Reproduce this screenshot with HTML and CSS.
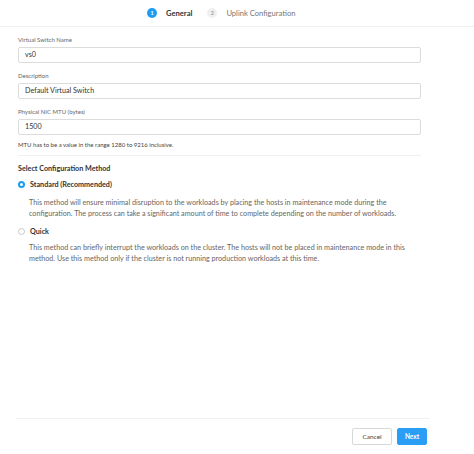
FILE: index.html
```html
<!DOCTYPE html>
<html>
<head>
<meta charset="utf-8">
<link rel="stylesheet" href="styles.css">
</head>
<body>
<div class="page">
  <header class="steps">
    <div class="step active"><span class="num">1</span><span class="step-label">General</span></div>
    <div class="step"><span class="num">2</span><span class="step-label">Uplink Configuration</span></div>
  </header>
  <main class="form">
    <label class="label">Virtual Switch Name</label>
    <div class="input">vs0</div>
    <label class="label">Description</label>
    <div class="input">Default Virtual Switch</div>
    <label class="label">Physical NIC MTU (bytes)</label>
    <div class="input">1500</div>
    <div class="help">MTU has to be a value in the range 1280 to 9216 inclusive.</div>
    <div class="sep"></div>
    <div class="section-title">Select Configuration Method</div>
    <div class="radio-row"><span class="radio checked"></span><span class="radio-label">Standard (Recommended)</span></div>
    <p class="desc first">This method will ensure minimal disruption to the workloads by placing the hosts in maintenance mode during the<br>configuration. The process can take a significant amount of time to complete depending on the number of workloads.</p>
    <div class="radio-row quick"><span class="radio"></span><span class="radio-label">Quick</span></div>
    <p class="desc second">This method can briefly interrupt the workloads on the cluster. The hosts will not be placed in maintenance mode in this<br>method. Use this method only if the cluster is not running production workloads at this time.</p>
  </main>
  <footer class="footer">
    <button class="btn cancel">Cancel</button>
    <button class="btn next">Next</button>
  </footer>
</div>
</body>
</html>
```
FILE: styles.css
```css
* { box-sizing: border-box; }
html, body { margin: 0; padding: 0; background: #fff; }
body { font-family: Lato, "Liberation Sans", sans-serif; color: #333; }
.page { min-height: 454px; display: flex; flex-direction: column; }

.steps {
  height: 27px;
  border-bottom: 1px solid #f1f1f1;
  display: flex;
  align-items: center;
  padding-left: 147px;
  gap: 15px;
}
.step { display: flex; align-items: center; gap: 9px; font-size: 7.6px; color: #777; }
.step .num {
  width: 10px; height: 10px; border-radius: 50%;
  background: #f0f0f0; color: #888;
  font-size: 5.5px; line-height: 10px; text-align: center;
}
.step.active .num { background: #1c9cf2; color: #fff; font-weight: 700; }
.step.active .step-label { color: #333; font-weight: 700; }

.form { padding: 0 53px 0 18px; display: flex; flex-direction: column; }
.label { display: block; font-size: 6px; line-height: 8px; color: #666; margin-top: 9px; }
.input {
  margin-top: 3px; height: 16px; border: 1px solid #dcdcdc; border-radius: 2px;
  font-size: 7.2px; line-height: 14px; padding-left: 6px; color: #333;
}
.help { font-size: 6px; line-height: 8px; color: #444; margin-top: 6px; }
.sep { margin-top: 6px; border-top: 1px solid #f0f0f0; }
.section-title { font-size: 7.2px; line-height: 8px; font-weight: 700; color: #333; margin-top: 9px; }
.radio-row { display: flex; align-items: center; gap: 5px; margin-top: 7px; height: 8px; }
.radio-row.quick { margin-top: 8px; }
.radio {
  width: 7px; height: 7px; border-radius: 50%; border: 1px solid #c8c8c8; background: #fff;
  margin-left: 0;
}
.radio.checked { border: 2px solid #1c9cf2; }
.radio-label { font-size: 7.2px; font-weight: 700; color: #333; }
.desc { margin: 9px 0 0 11px; font-size: 7.2px; line-height: 11px; color: #666; white-space: nowrap; }
.desc.second { margin-top: 7px; }

.footer {
  margin: auto 44px 0 16px;
  border-top: 1px solid #f1f1f1;
  padding: 9px 3px 9px 0;
  display: flex; justify-content: flex-end; gap: 5px;
}
.btn {
  height: 17px; border-radius: 2px; font-family: Lato, "Liberation Sans", sans-serif;
  font-size: 6.5px; padding: 0; cursor: pointer;
}
.cancel { width: 40px; background: #fff; border: 1px solid #d8d8d8; color: #444; }
.next { width: 30px; background: #2a9df4; border: 1px solid #2a9df4; color: #fff; font-weight: 700; }
```
